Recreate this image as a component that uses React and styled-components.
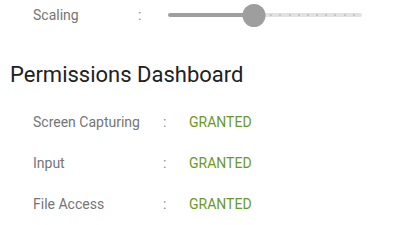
import React from "react";
import styled, { createGlobalStyle } from "styled-components";

const Global = createGlobalStyle`
  html, body { margin: 0; padding: 0; background: #fff; }
  body { font-family: Roboto, "Noto Sans", sans-serif; width: 400px; height: 225px; overflow: hidden; }
`;

const Page = styled.div`
  display: flex;
  flex-direction: column;
`;

const SettingRow = styled.div`
  display: flex;
  align-items: center;
  height: 30px;
  padding-left: 33px;
`;

const Label = styled.div`
  width: ${(p) => p.$w}px;
  font-size: 14px;
  color: #757575;
`;

const Colon = styled.div`
  width: ${(p) => p.$w}px;
  font-size: 14px;
  color: #8a8a8a;
`;

const Value = styled.div`
  font-size: 14px;
  color: #6a9a22;
`;

const SliderWrap = styled.div`
  position: relative;
  width: 194px;
  height: 24px;
  display: flex;
  align-items: center;
`;

const TrackActive = styled.div`
  height: 4px;
  border-radius: 2px;
  background: #9e9e9e;
`;

const TrackInactive = styled.div`
  flex: 1;
  height: 4px;
  border-radius: 2px;
  background: #e2e2e2;
  display: flex;
  justify-content: space-evenly;
  align-items: center;
`;

const Tick = styled.span`
  width: 2px;
  height: 2px;
  border-radius: 1px;
  background: #bdbdbd;
`;

const Thumb = styled.div`
  position: absolute;
  top: 1px;
  width: 23px;
  height: 23px;
  border-radius: 50%;
  background: #9e9e9e;
  transform: translateX(-50%);
`;

const Title = styled.h1`
  margin: 31px 0 0 10px;
  font-weight: 400;
  font-size: 22px;
  color: #212121;
  line-height: 28px;
`;

const List = styled.div`
  display: flex;
  flex-direction: column;
  margin-top: 21px;
  gap: 17px;
`;

const PermRow = styled.div`
  display: flex;
  align-items: center;
  height: 24px;
  padding-left: 33px;
`;

const perms = ["Screen Capturing", "Input", "File Access"];

export default function App() {
  const pos = 86;
  return (
    <Page>
      <Global />
      <SettingRow>
        <Label $w={105}>Scaling</Label>
        <Colon $w={30}>:</Colon>
        <SliderWrap>
          <TrackActive style={{ width: pos + "px" }} />
          <TrackInactive>
            {Array.from({ length: 11 }).map((_, i) => (
              <Tick key={i} />
            ))}
          </TrackInactive>
          <Thumb style={{ left: pos + "px" }} />
        </SliderWrap>
      </SettingRow>
      <Title>Permissions Dashboard</Title>
      <List>
        {perms.map((p) => (
          <PermRow key={p}>
            <Label $w={130}>{p}</Label>
            <Colon $w={26}>:</Colon>
            <Value>GRANTED</Value>
          </PermRow>
        ))}
      </List>
    </Page>
  );
}
